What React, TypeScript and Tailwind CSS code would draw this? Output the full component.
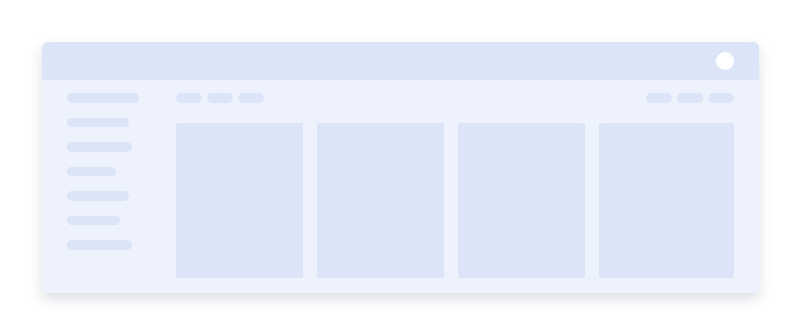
import React from 'react';

const sideBars = [72, 62, 65, 49, 62, 53, 65];

const Pill: React.FC = () => <div className="h-[10px] w-[26px] rounded-full bg-[#dce4f7]" />;

const App: React.FC = () => {
    return (
        <div className="w-[800px] h-[335px] bg-white pt-[42px] pl-[42px] overflow-hidden">
            <div className="w-[717px] h-[251px] rounded-[6px] bg-[#eef2fd] shadow-[0_6px_14px_rgba(40,50,80,0.16)] overflow-hidden flex flex-col">
                {/* header */}
                <div className="h-[38px] bg-[#dce4f7] flex items-center justify-end pr-[25px]">
                    <div className="w-[18px] h-[18px] rounded-full bg-white" />
                </div>

                {/* body */}
                <div className="flex-1 flex pl-[25px] pr-[25px] pt-[13px] pb-[15px]">
                    <div className="w-[109px] flex flex-col gap-[15px]">
                        {sideBars.map((w, i) => (
                            <div key={i} className="h-[9.5px] rounded-full bg-[#dce4f7]" style={{ width: w }} />
                        ))}
                    </div>

                    <div className="flex-1 flex flex-col">
                        <div className="flex justify-between">
                            <div className="flex gap-[5px]">
                                <Pill />
                                <Pill />
                                <Pill />
                            </div>
                            <div className="flex gap-[5px]">
                                <Pill />
                                <Pill />
                                <Pill />
                            </div>
                        </div>
                        <div className="flex-1 flex gap-[14px] mt-[20px]">
                            <div className="w-[127px] rounded-[2px] bg-[#dce4f7]" />
                            <div className="w-[127px] rounded-[2px] bg-[#dce4f7]" />
                            <div className="w-[127px] rounded-[2px] bg-[#dce4f7]" />
                            <div className="flex-1 rounded-[2px] bg-[#dce4f7]" />
                        </div>
                    </div>
                </div>
            </div>
        </div>
    );
};

export default App;
